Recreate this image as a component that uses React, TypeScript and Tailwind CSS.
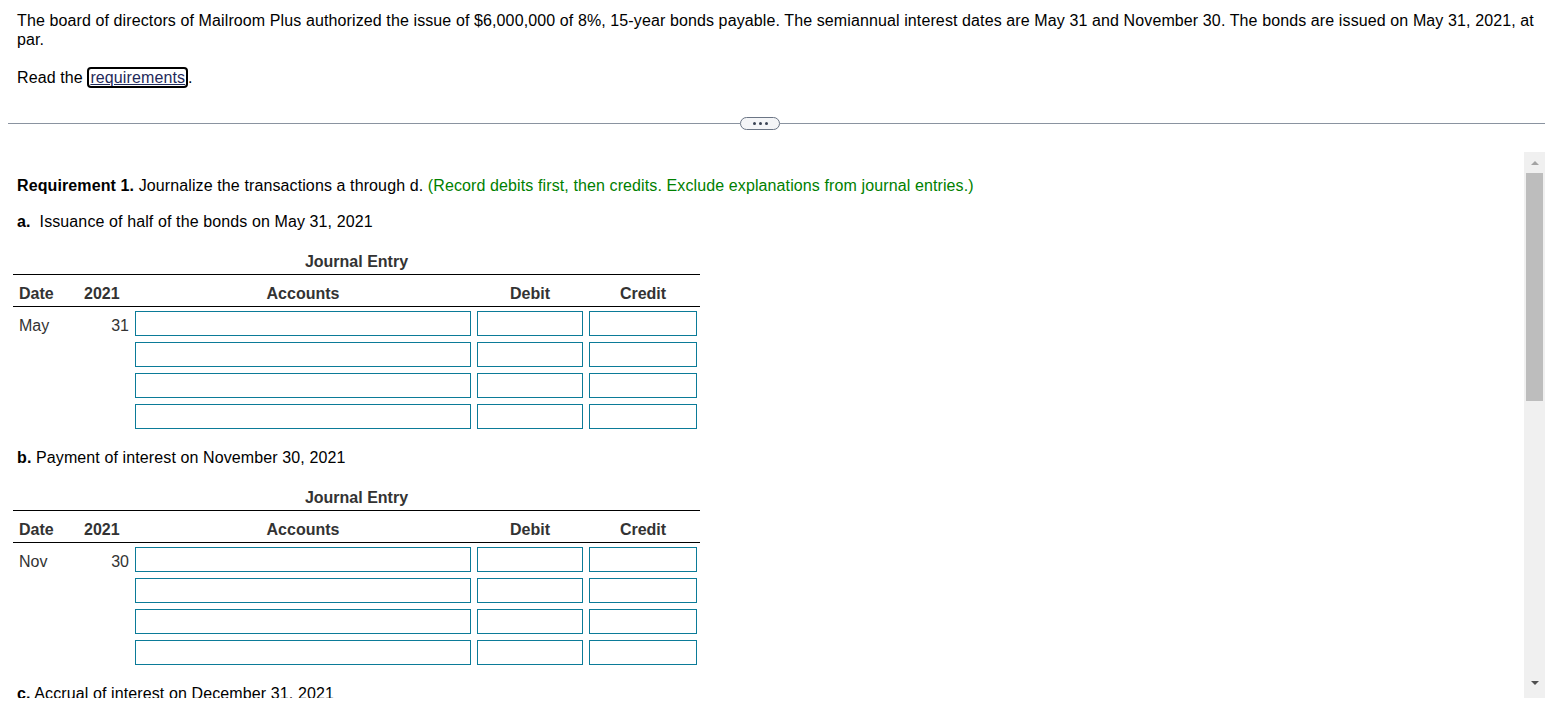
import React from "react";

const font = { fontFamily: '"Liberation Sans", Arial, sans-serif' };

function JournalTable({ month, day }: { month: string; day: string }) {
  const rows = [0, 1, 2, 3];
  return (
    <div className="w-[687px] text-[#333] tracking-normal">
      <div className="h-[20px] leading-[20px] mb-[2px] text-center font-bold text-[16px]">Journal Entry</div>
      <div className="border-t border-b border-black grid grid-cols-[57px_62px_342px_112px_114px] h-[33px] pt-[9px] font-bold text-[16px] leading-[20px]">
        <div className="pl-[6px]">Date</div>
        <div className="pl-[14px]">2021</div>
        <div className="text-center">Accounts</div>
        <div className="text-center">Debit</div>
        <div className="text-center">Credit</div>
      </div>
      <div className="pt-[1px]">
        {rows.map((r) => (
          <div key={r} className="grid grid-cols-[57px_62px_342px_112px_114px] h-[31px] py-[3px] text-[16px]">
            <div className="pl-[6px] flex items-center pt-[3px]">{r === 0 ? month : ""}</div>
            <div className="pr-[3px] flex items-center justify-end pt-[3px]">{r === 0 ? day : ""}</div>
            <div className="px-[3px]">
              <div className="h-[25px] border border-[#0b7b98] bg-white" />
            </div>
            <div className="px-[3px]">
              <div className="h-[25px] border border-[#0b7b98] bg-white" />
            </div>
            <div className="px-[3px]">
              <div className="h-[25px] border border-[#0b7b98] bg-white" />
            </div>
          </div>
        ))}
      </div>
    </div>
  );
}

export default function App() {
  return (
    <div className="w-[1557px] h-[711px] bg-white overflow-hidden text-black text-[16px] tracking-[0.11px]" style={font}>
      <div className="pl-[17px] pr-[8px] pt-[11px] leading-[19px]">
        <p>
          The board of directors of Mailroom Plus authorized the issue of $6,000,000 of 8%, 15-year bonds payable. The semiannual interest dates are May 31 and November 30. The bonds are issued on May 31, 2021, at
          <br />
          par.
        </p>
        <p className="mt-[19px] leading-[20px]">
          Read the{" "}
          <span className="border-2 border-black rounded-[4px] px-[1px] underline text-[#1f2a5a]">requirements</span>.
        </p>
      </div>

      <div className="flex items-center ml-[8px] w-[1537px] mt-[29px] h-[13px]">
        <div className="w-[732px] h-px bg-[#8a93a0]" />
        <div className="w-[40px] h-[13px] rounded-full border border-[#6b7585] bg-[#f4f5f7] flex items-center justify-center gap-[3px]">
          <span className="w-[3px] h-[3px] bg-[#3b4454] rounded-full" />
          <span className="w-[3px] h-[3px] bg-[#3b4454] rounded-full" />
          <span className="w-[3px] h-[3px] bg-[#3b4454] rounded-full" />
        </div>
        <div className="flex-1 h-px bg-[#8a93a0]" />
      </div>

      <div className="flex ml-[8px] w-[1537px] h-[546px] mt-[22px]">
        <div className="flex-1 overflow-hidden pl-[5px] pt-[24px]">
          <div className="pl-[4px] leading-[20px]">
            <span className="font-bold">Requirement 1.</span> Journalize the transactions a through d.{" "}
            <span className="text-[#008000]">(Record debits first, then credits. Exclude explanations from journal entries.)</span>
          </div>
          <div className="pl-[4px] leading-[20px] mt-[16px]">
            <span className="font-bold">a.</span>
            <span className="ml-[9px]">Issuance of half of the bonds on May 31, 2021</span>
          </div>
          <div className="mt-[20px]">
            <JournalTable month="May" day="31" />
          </div>
          <div className="pl-[4px] leading-[20px] mt-[16px]">
            <span className="font-bold">b.</span> Payment of interest on November 30, 2021
          </div>
          <div className="mt-[20px]">
            <JournalTable month="Nov" day="30" />
          </div>
          <div className="pl-[4px] leading-[20px] mt-[16px]">
            <span className="font-bold">c.</span> Accrual of interest on December 31, 2021
          </div>
        </div>
        <div className="w-[21px] bg-[#f0f0f0] flex flex-col">
          <div className="h-[21px] flex items-center justify-center">
            <div className="w-0 h-0 border-l-[4px] border-r-[4px] border-b-[4px] border-l-transparent border-r-transparent border-b-[#a3a3a3]" />
          </div>
          <div className="mx-[2px] h-[228px] bg-[#bdbdbd]" />
          <div className="flex-1" />
          <div className="h-[26px] flex items-center justify-center pb-[4px]">
            <div className="w-0 h-0 border-l-[4px] border-r-[4px] border-t-[4px] border-l-transparent border-r-transparent border-t-[#505050]" />
          </div>
        </div>
      </div>
    </div>
  );
}
